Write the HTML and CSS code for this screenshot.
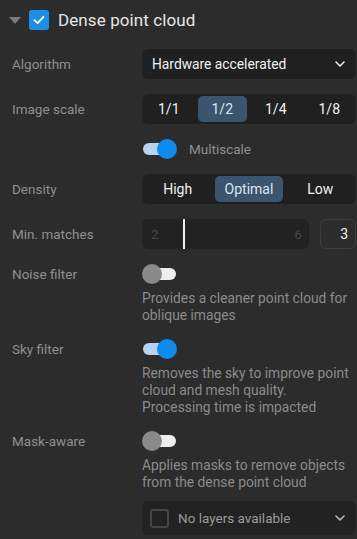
FILE: index.html
```html
<!DOCTYPE html>
<html>
<head>
<meta charset="utf-8">
<link rel="stylesheet" href="styles.css">
</head>
<body>
<div class="panel">
  <div class="header">
    <svg class="caret" width="12" height="7" viewBox="0 0 12 7"><path d="M0 0 H12 L6 7 Z" fill="#7a7a7a"/></svg>
    <span class="check on">
      <svg width="14" height="14" viewBox="0 0 14 14"><path d="M2.5 7.2 L5.6 10.2 L11.5 3.8" fill="none" stroke="#fff" stroke-width="1.8" stroke-linecap="round" stroke-linejoin="round"/></svg>
    </span>
    <span class="title">Dense point cloud</span>
  </div>

  <div class="rows">
    <div class="row">
      <div class="label h30">Algorithm</div>
      <div class="ctrl">
        <div class="select">
          <span>Hardware accelerated</span>
          <svg width="10" height="6" viewBox="0 0 10 6"><path d="M1 1 L5 5 L9 1" fill="none" stroke="#e8e8e8" stroke-width="1.6" stroke-linecap="round" stroke-linejoin="round"/></svg>
        </div>
      </div>
    </div>

    <div class="row">
      <div class="label h30">Image scale</div>
      <div class="ctrl">
        <div class="seg four">
          <span>1/1</span><span class="sel">1/2</span><span>1/4</span><span>1/8</span>
        </div>
      </div>
    </div>

    <div class="row">
      <div class="label h20"></div>
      <div class="ctrl toggle-line">
        <span class="toggle on"><span class="track"></span><span class="thumb"></span></span>
        <span class="toggle-text">Multiscale</span>
      </div>
    </div>

    <div class="row">
      <div class="label h30">Density</div>
      <div class="ctrl">
        <div class="seg three">
          <span>High</span><span class="sel">Optimal</span><span>Low</span>
        </div>
      </div>
    </div>

    <div class="row">
      <div class="label h30">Min. matches</div>
      <div class="ctrl slider-line">
        <div class="slider">
          <span class="min">2</span>
          <span class="knob"></span>
          <span class="max">6</span>
        </div>
        <div class="num">3</div>
      </div>
    </div>

    <div class="row">
      <div class="label h20">Noise filter</div>
      <div class="ctrl">
        <span class="toggle off"><span class="track"></span><span class="thumb"></span></span>
        <p class="desc">Provides a cleaner point cloud for oblique images</p>
      </div>
    </div>

    <div class="row">
      <div class="label h20">Sky filter</div>
      <div class="ctrl">
        <span class="toggle on"><span class="track"></span><span class="thumb"></span></span>
        <p class="desc">Removes the sky to improve point cloud and mesh quality.<br>Processing time is impacted</p>
      </div>
    </div>

    <div class="row">
      <div class="label h20">Mask-aware</div>
      <div class="ctrl">
        <span class="toggle off"><span class="track"></span><span class="thumb"></span></span>
        <p class="desc">Applies masks to remove objects from the dense point cloud</p>
        <div class="layers">
          <span class="check empty"></span>
          <span class="layers-text">No layers available</span>
          <svg width="10" height="6" viewBox="0 0 10 6"><path d="M1 1 L5 5 L9 1" fill="none" stroke="#bdbdbd" stroke-width="1.6" stroke-linecap="round" stroke-linejoin="round"/></svg>
        </div>
      </div>
    </div>
  </div>
</div>
</body>
</html>
```

FILE: styles.css
```css
html, body {
  margin: 0;
  padding: 0;
  background: #2c2c2c;
  font-family: Roboto, "Noto Sans", sans-serif;
  overflow: hidden;
}

.panel {
  width: 357px;
  height: 539px;
  box-sizing: border-box;
  padding: 0 1px 0 12px;
}

.header {
  height: 40px;
  display: flex;
  align-items: center;
  margin-left: -3px;
}

.caret {
  margin-right: 8px;
}

.check {
  box-sizing: border-box;
  width: 20px;
  height: 20px;
  border-radius: 3px;
  display: inline-flex;
  align-items: center;
  justify-content: center;
  flex: none;
}

.check.on {
  background: #1b8fe6;
}

.check.empty {
  border: 2px solid #454545;
  border-radius: 3px;
  width: 19px;
  height: 19px;
}

.title {
  margin-left: 9px;
  font-size: 17px;
  color: #e6e6e6;
  letter-spacing: 0.1px;
}

.rows {
  display: flex;
  flex-direction: column;
  gap: 15px;
  margin-top: 9px;
}

.row {
  display: grid;
  grid-template-columns: 130px 1fr;
  align-items: start;
}

.label {
  font-size: 13.5px;
  color: #8f8f8f;
}

.h30 { line-height: 30px; }
.h20 { line-height: 20px; }

.ctrl {
  min-width: 0;
}

.select {
  height: 30px;
  background: #202020;
  border-radius: 6px;
  display: flex;
  align-items: center;
  justify-content: space-between;
  padding: 0 11px 0 10px;
  font-size: 13.8px;
  color: #f0f0f0;
}

.seg {
  height: 30px;
  background: #202020;
  border-radius: 6px;
  display: grid;
  padding: 2px 0;
  box-sizing: border-box;
}

.seg.four { grid-template-columns: repeat(4, 1fr); }
.seg.three { grid-template-columns: repeat(3, 1fr); }

.seg span {
  display: flex;
  align-items: center;
  justify-content: center;
  margin: 0 2px;
  border-radius: 5px;
  font-size: 14px;
  color: #f2f2f2;
}

.seg span.sel {
  background: #3a556f;
  color: #d8e6f2;
}

.toggle-line {
  display: flex;
  align-items: center;
  height: 20px;
}

.toggle {
  position: relative;
  display: block;
  width: 36px;
  height: 20px;
  flex: none;
}

.toggle-line .toggle {
  display: inline-block;
}

.toggle .track {
  position: absolute;
  left: 1px;
  top: 4px;
  width: 33px;
  height: 12px;
  border-radius: 6px;
}

.toggle .thumb {
  position: absolute;
  top: 0;
  width: 20px;
  height: 20px;
  border-radius: 50%;
}

.toggle.on .track { background: #b6d3f1; }
.toggle.on .thumb { left: 15px; background: #0f8ceb; }
.toggle.off .track { background: #eeeeee; }
.toggle.off .thumb { left: 0; background: #8a8a8a; }

.toggle-text {
  margin-left: 11px;
  font-size: 13.5px;
  color: #8f8f8f;
}

.slider-line {
  display: flex;
  gap: 11px;
  height: 30px;
}

.slider {
  position: relative;
  flex: 1;
  background: #222222;
  border-radius: 6px;
  display: flex;
  align-items: center;
  justify-content: space-between;
  padding: 0 7px 0 9px;
  font-size: 13.5px;
  color: #464646;
}

.slider .knob {
  position: absolute;
  left: 41px;
  top: 0;
  width: 2px;
  height: 30px;
  background: #f0f0f0;
}

.num {
  box-sizing: border-box;
  width: 36px;
  height: 30px;
  border: 1px solid #3d3d3d;
  border-radius: 6px;
  display: flex;
  align-items: center;
  justify-content: flex-end;
  padding-right: 7px;
  font-size: 14px;
  color: #f2f2f2;
}

.desc {
  margin: 6px 0 0 0;
  font-size: 13.8px;
  line-height: 17px;
  color: #8b8b8b;
}

.layers {
  margin-top: 10px;
  height: 34px;
  background: #222222;
  border-radius: 6px;
  display: flex;
  align-items: center;
  padding: 0 11px 0 8px;
}

.layers-text {
  flex: 1;
  margin-left: 9px;
  font-size: 13.5px;
  color: #9a9a9a;
}
```
